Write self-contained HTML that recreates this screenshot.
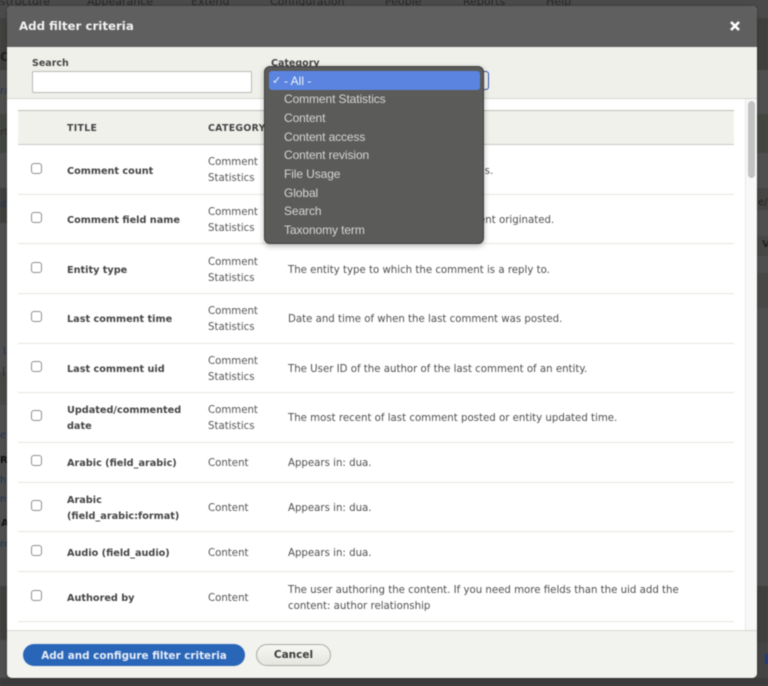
<!DOCTYPE html>
<html><head><meta charset="utf-8">
<style>
html,body{margin:0;padding:0;width:768px;height:686px;overflow:hidden;background:#4f4f4f}
#r{position:relative;width:768px;height:686px;overflow:hidden;filter:blur(.4px);font-family:"DejaVu Sans",sans-serif}
#r div{position:absolute;white-space:nowrap}
.t{font-size:9.7px;font-weight:bold;color:#444;left:67px;line-height:16.4px;margin-top:2px}
.c{font-size:10.2px;color:#555;left:208px;line-height:16.4px;margin-top:2px}
.d{font-size:10.2px;color:#4f4f4f;left:288px;line-height:16.4px;margin-top:2px}
.l{left:18px;width:716px;height:1px;background:#e6e6e1}
.k{left:31px;width:9px;height:9px;border:1px solid #8e8e8e;border-radius:3px;background:#fff}
.o{left:284px;font:12px "Liberation Sans",sans-serif;color:#d6d6d6;line-height:16px}
.bg{font-size:10px;color:#2b2b2b}
.bl{font-size:10px;color:#22354f}
.b{background:#3f3f3d}
</style></head><body><div id="r">
<div style="left:0;top:0;width:768px;height:18px;background:#4a4a4a"></div>
<div class="bg" style="left:0;top:-5px;font-size:11px;color:#262626">structure</div>
<div class="bg" style="left:87px;top:-5px;font-size:11px;color:#262626">Appearance</div>
<div class="bg" style="left:191px;top:-5px;font-size:11px;color:#262626">Extend</div>
<div class="bg" style="left:270px;top:-5px;font-size:11px;color:#262626">Configuration</div>
<div class="bg" style="left:385px;top:-5px;font-size:11px;color:#262626">People</div>
<div class="bg" style="left:463px;top:-5px;font-size:11px;color:#262626">Reports</div>
<div class="bg" style="left:546px;top:-5px;font-size:11px;color:#262626">Help</div>
<div class="b" style="left:0;top:18px;width:7px;height:52px"></div>
<div class="b" style="left:757px;top:18px;width:11px;height:52px"></div>
<div style="left:0;top:114px;width:7px;height:39px;background:#43463f"></div>
<div style="left:757px;top:114px;width:11px;height:39px;background:#43463f"></div>
<div class="b" style="left:0;top:188px;width:7px;height:35px"></div>
<div style="left:757px;top:188px;width:11px;height:22px;background:#454543"></div>
<div style="left:757px;top:236px;width:11px;height:20px;background:#474745"></div>
<div style="left:757px;top:273px;width:11px;height:35px;background:#484846"></div>
<div style="left:0;top:372px;width:7px;height:33px;background:#474745"></div>
<div class="b" style="left:0;top:586px;width:7px;height:54px"></div>
<div class="b" style="left:757px;top:586px;width:11px;height:57px"></div>
<div style="left:0;top:678px;width:768px;height:8px;background:#3b3b3b"></div>
<div style="left:757px;top:643px;width:11px;height:35px;background:#444"></div>
<div style="left:765px;top:654px;width:3px;height:10px;background:#1f3a7a"></div>
<div class="bg" style="left:0;top:50px;font-weight:bold;font-size:12px;color:#1e1e1e">O</div>
<div class="bl" style="left:0;top:86px">ra</div>
<div class="bg" style="left:0;top:127px">rt</div>
<div class="bl" style="left:0;top:199px">d</div>
<div class="bl" style="left:6px;top:239px">E</div>
<div class="bg" style="left:758px;top:197px;color:#222">e/d</div>
<div class="bg" style="left:762px;top:239px;color:#222;font-weight:bold">V</div>
<div class="bl" style="left:3px;top:346px">L</div>
<div class="bg" style="left:2px;top:366px">|</div>
<div class="bl" style="left:0;top:430px">e</div>
<div class="bg" style="left:0;top:455px;font-weight:bold;color:#111">RI</div>
<div class="bl" style="left:0;top:475px">he</div>
<div class="bl" style="left:0;top:494px">nt</div>
<div class="bg" style="left:1px;top:518px;font-weight:bold;color:#111">A</div>
<div class="bl" style="left:0;top:539px">re</div>

<div style="left:7px;top:6px;width:750px;height:672px;background:#fff;border-radius:5px;box-shadow:0 0 3px rgba(0,0,0,.3)"></div>
<div style="left:7px;top:6px;width:750px;height:41px;background:#5f5f5f;border-radius:5px 5px 0 0"></div>
<div style="left:19px;top:18px;font-size:11.8px;font-weight:bold;color:#f2f2f2;line-height:16px">Add filter criteria</div>
<svg style="position:absolute;left:729px;top:20px" width="12" height="12" viewBox="0 0 12 12"><path d="M2 2L10 10M10 2L2 10" stroke="#fff" stroke-width="2.6"/></svg>

<div style="left:7px;top:47px;width:750px;height:51px;background:#f0f0eb;border-bottom:1px solid #d6d6d1"></div>
<div style="left:32px;top:56px;font-size:9.5px;font-weight:bold;color:#444;line-height:16px">Search</div>
<div style="left:271px;top:56px;font-size:9.5px;font-weight:bold;color:#444;line-height:16px">Category</div>
<div style="left:32px;top:71px;width:218px;height:20px;background:#fff;border:1px solid #b9b9b4;border-radius:2px"></div>
<div style="left:440px;top:71px;width:47px;height:17px;border:1.5px solid #2a52be;border-radius:3px;background:#f4f4f0"></div>

<div style="left:745px;top:99px;width:12px;height:531px;background:#f8f8f8;border-left:1px solid #e8e8e8;box-sizing:border-box"></div>
<div style="left:748px;top:101px;width:7px;height:77px;background:#c2c2c2;border-radius:4px"></div>

<div style="left:18px;top:110px;width:716px;height:35px;background:#f1f1ec;border-top:1px solid #bdbdb9;border-bottom:1px solid #c8c8c4;box-sizing:border-box"></div>
<div style="left:67px;top:121px;font-size:9.3px;font-weight:bold;color:#444;line-height:16px;letter-spacing:.35px">TITLE</div>
<div style="left:208px;top:121px;font-size:9.3px;font-weight:bold;color:#444;line-height:16px;letter-spacing:.35px">CATEGORY</div>

<div class="l" style="top:194px"></div><div class="l" style="top:243px"></div><div class="l" style="top:293px"></div><div class="l" style="top:343px"></div><div class="l" style="top:392px"></div><div class="l" style="top:442px"></div><div class="l" style="top:482px"></div><div class="l" style="top:531px"></div><div class="l" style="top:571px"></div><div class="l" style="top:621px"></div>

<div class="k" style="top:163px"></div><div class="t" style="top:162px">Comment count</div><div class="c" style="top:153px">Comment<br>Statistics</div><div class="d" style="top:162px">The number of comments an entity has.</div>
<div class="k" style="top:212px"></div><div class="t" style="top:211px">Comment field name</div><div class="c" style="top:203px">Comment<br>Statistics</div><div class="d" style="top:211px">The field name from which the comment originated.</div>
<div class="k" style="top:262px"></div><div class="t" style="top:261px">Entity type</div><div class="c" style="top:253px">Comment<br>Statistics</div><div class="d" style="top:261px">The entity type to which the comment is a reply to.</div>
<div class="k" style="top:311px"></div><div class="t" style="top:310px">Last comment time</div><div class="c" style="top:302px">Comment<br>Statistics</div><div class="d" style="top:310px">Date and time of when the last comment was posted.</div>
<div class="k" style="top:361px"></div><div class="t" style="top:360px">Last comment uid</div><div class="c" style="top:352px">Comment<br>Statistics</div><div class="d" style="top:360px">The User ID of the author of the last comment of an entity.</div>
<div class="k" style="top:410px"></div><div class="t" style="top:401px">Updated/commented<br>date</div><div class="c" style="top:401px">Comment<br>Statistics</div><div class="d" style="top:409px">The most recent of last comment posted or entity updated time.</div>
<div class="k" style="top:455px"></div><div class="t" style="top:454px">Arabic (field_arabic)</div><div class="c" style="top:454px">Content</div><div class="d" style="top:454px">Appears in: dua.</div>
<div class="k" style="top:500px"></div><div class="t" style="top:491px">Arabic<br>(field_arabic:format)</div><div class="c" style="top:499px">Content</div><div class="d" style="top:499px">Appears in: dua.</div>
<div class="k" style="top:545px"></div><div class="t" style="top:544px">Audio (field_audio)</div><div class="c" style="top:544px">Content</div><div class="d" style="top:544px">Appears in: dua.</div>
<div class="k" style="top:590px"></div><div class="t" style="top:589px">Authored by</div><div class="c" style="top:589px">Content</div><div class="d" style="top:581px">The user authoring the content. If you need more fields than the uid add the<br>content: author relationship</div>

<div style="left:7px;top:630px;width:750px;height:48px;background:#f2f2ee;border-top:1px solid #d8d8d4;box-sizing:border-box;border-radius:0 0 5px 5px"></div>
<div style="left:23px;top:644px;width:222px;height:22px;background:#2a66b8;border-radius:11px"></div>
<div style="left:23px;top:645px;width:222px;text-align:center;font-size:10.4px;font-weight:bold;color:#e8eef8;line-height:22px">Add and configure filter criteria</div>
<div style="left:256px;top:644px;width:73px;height:20px;background:linear-gradient(#f6f6f2,#e6e6e1);border:1px solid #aaaaa5;border-radius:11px;text-align:center;font-size:10.5px;font-weight:bold;color:#3a3a3a;line-height:21px">Cancel</div>

<div style="left:264px;top:66px;width:220px;height:178px;background:#5b5b5a;border:1px solid #3e3e3e;box-sizing:border-box;border-radius:6px;box-shadow:0 2px 6px rgba(0,0,0,.3)"></div>
<div style="left:269px;top:71px;width:211px;height:19px;background:#5a84df;border-radius:3px"></div>
<div class="o" style="left:272px;top:73px;color:#eef2fb;font-size:11px">✓</div>
<div class="o" style="top:73px;color:#eef2fb">- All -</div>
<div class="o" style="top:91px;letter-spacing:-.1px">Comment Statistics</div>
<div class="o" style="top:110px;letter-spacing:-.1px">Content</div>
<div class="o" style="top:129px;letter-spacing:-.1px">Content access</div>
<div class="o" style="top:147px;letter-spacing:-.1px">Content revision</div>
<div class="o" style="top:166px;letter-spacing:-.1px">File Usage</div>
<div class="o" style="top:185px;letter-spacing:-.1px">Global</div>
<div class="o" style="top:203px;letter-spacing:-.1px">Search</div>
<div class="o" style="top:222px;letter-spacing:-.1px">Taxonomy term</div>
</div></body></html>
